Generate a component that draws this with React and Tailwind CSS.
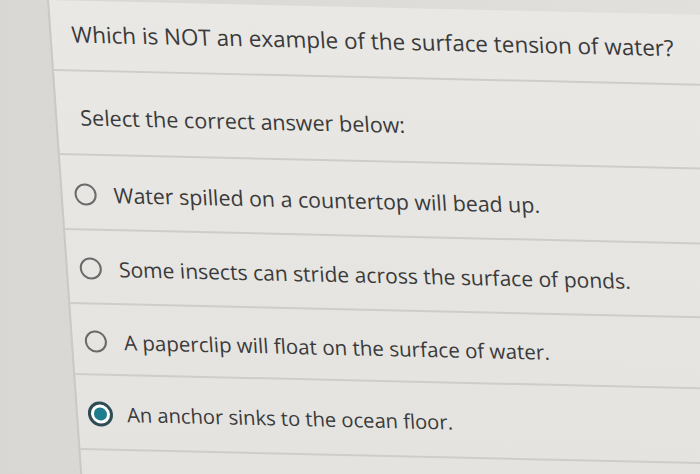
export default function App() {
  const options = [
    { text: "Water spilled on a countertop will bead up.", h: "h-[75px]", size: "text-[21.3px]", selected: false },
    { text: "Some insects can stride across the surface of ponds.", h: "h-[74px]", size: "text-[21px]", selected: false },
    { text: "A paperclip will float on the surface of water.", h: "h-[71px]", size: "text-[20.5px]", selected: false },
    { text: "An anchor sinks to the ocean floor.", h: "h-[75px]", size: "text-[20.1px]", selected: true },
  ];
  return (
    <div
      className="w-[700px] h-[474px] overflow-hidden bg-gradient-to-r from-[#d9d7d4] to-[#e2e0dd]"
      style={{ fontFamily: '"Open Sans", "Noto Sans", sans-serif' }}
    >
      <div className="ml-[47px] origin-top-left skew-x-[4deg] skew-y-[1.3deg]">
        <div className="w-[760px] h-[560px] border-l-2 border-[#cbc9c6] bg-gradient-to-b from-[#e9e8e5] to-[#e3e2df] text-[#3a3a3a]">
          <div className="h-[71px] border-b-2 border-[#cfcdca] pl-[20px] pt-[18px]">
            <p className="text-[22.4px] leading-[32px] whitespace-nowrap">
              Which is NOT an example of the surface tension of water?
            </p>
          </div>
          <div className="h-[84px] border-b-2 border-[#cfcdca] pl-[23px] pt-[31px]">
            <p className="text-[21.5px] leading-[30px] whitespace-nowrap">Select the correct answer below:</p>
          </div>
          {options.map((o) => (
            <div
              key={o.text}
              className={`${o.h} border-b-2 border-[#cfcdca] pt-[4px] flex items-center ${
                o.selected ? "pl-[10px] gap-[14px]" : "pl-[12px] gap-[17px]"
              }`}
            >
              {o.selected ? (
                <span className="w-[25px] h-[25px] rounded-full border-[3px] border-[#2f4c54] bg-white flex items-center justify-center shrink-0">
                  <span className="w-[13px] h-[13px] rounded-full bg-[#1d7d8c]" />
                </span>
              ) : (
                <span className="w-[22px] h-[22px] rounded-full border-2 border-[#6a6a6a] shrink-0" />
              )}
              <span className={`${o.size} leading-[28px] whitespace-nowrap`}>{o.text}</span>
            </div>
          ))}
        </div>
      </div>
    </div>
  );
}
